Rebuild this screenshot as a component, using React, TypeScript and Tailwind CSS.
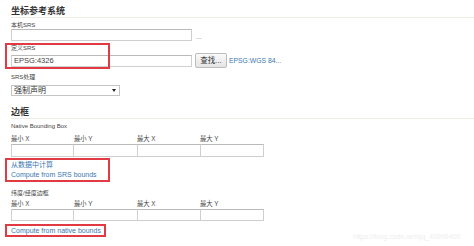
const font = "font-['Liberation_Sans','Noto_Sans_CJK_SC',sans-serif]"

function Label({ children }: { children: React.ReactNode }) {
  return <div className="h-[8px] text-[6px] leading-[8px] text-[#444]">{children}</div>
}

function Heading({ children, className }: { children: React.ReactNode; className: string }) {
  return (
    <div className={`border-b border-[#ecece6] text-[9px] font-bold text-[#333] ${className}`}>
      {children}
    </div>
  )
}

const cols = ['最小 X', '最小 Y', '最大 X', '最大 Y']

function BoundsGrid({ inputHeight }: { inputHeight: string }) {
  return (
    <>
      <div className="grid w-[252px] grid-cols-4">
        {cols.map((c) => (
          <div key={c} className="h-[8px] text-[6.3px] leading-[8px] text-[#444]">
            {c}
          </div>
        ))}
      </div>
      <div className="mt-[1px] grid w-[253px] grid-cols-4">
        {cols.map((c, i) => (
          <div
            key={c}
            className={`${inputHeight} border border-[#cfcfcf] border-t-[#b9b9b9] bg-white ${i > 0 ? '-ml-px' : ''}`}
          />
        ))}
      </div>
    </>
  )
}

export default function App() {
  return (
    <div className={`relative h-[246px] w-[474px] overflow-hidden bg-white ${font}`}>
      <div className="flex flex-col pl-[11px]">
        <Heading className="mt-[5px] h-[13px] leading-[12px]">坐标参考系统</Heading>

        <div className="mt-[3px]">
          <Label>本机SRS</Label>
        </div>
        <div className="flex items-end">
          <div className="h-[12px] w-[181px] border border-[#cfcfcf] border-t-[#b9b9b9]" />
          <span className="ml-[4px] text-[7px] leading-[8px] text-[#888]">...</span>
        </div>

        <div className="mt-[3px]">
          <Label>定义SRS</Label>
        </div>
        <div className="mt-[1px] flex h-[15px] items-center">
          <div className="flex h-[12px] w-[181px] items-center border border-[#cfcfcf] border-t-[#b9b9b9] pl-[2px] text-[7.5px] text-[#444]">
            EPSG:4326
          </div>
          <button
            type="button"
            className="ml-[3px] flex h-[15px] w-[32px] items-center justify-center rounded-[2px] border border-[#bdbdbd] bg-gradient-to-b from-[#fafafa] to-[#e4e4e4] text-[7.5px] text-[#333]"
          >
            查找...
          </button>
          <span className="ml-[2px] mt-[2px] text-[6.8px] text-[#3a77b0]">EPSG:WGS 84...</span>
        </div>

        <div className="mt-[5px]">
          <Label>SRS处理</Label>
        </div>
        <div className="mt-[4px] flex h-[11px] w-[109px] items-center justify-between border border-[#c4c4c4] pl-[2px] pr-[3px] text-[8px] text-[#333]">
          <span>强制声明</span>
          <svg viewBox="0 0 4 3" className="h-[3px] w-[4px] fill-[#222]">
            <path d="M0 0h4L2 3z" />
          </svg>
        </div>

        <Heading className="mt-[11px] h-[12px] leading-[11px]">边框</Heading>

        <div className="mt-[3px]">
          <Label>Native Bounding Box</Label>
        </div>
        <div className="mt-[5px]">
          <BoundsGrid inputHeight="h-[13px]" />
        </div>

        <div className="-ml-[6px] mt-[1px] h-[24px] w-[105px] border-2 border-[#e23a43] pl-[4px] text-[7px] leading-[10px] text-[#3a77b0]">
          <div>从数据中计算</div>
          <div>Compute from SRS bounds</div>
        </div>

        <div className="mt-[7px]">
          <Label>纬度/经度边框</Label>
        </div>
        <div className="mt-[3px]">
          <BoundsGrid inputHeight="h-[12px]" />
        </div>

        <div className="-ml-[6px] mt-[3px] h-[13px] w-[101px] border-2 border-[#e23a43] pl-[4px] text-[7px] leading-[9px] text-[#3a77b0]">
          Compute from native bounds
        </div>
      </div>

      <div className="absolute left-[5px] top-[43px] h-[26px] w-[105px] border-2 border-[#e23a43]" />

      <div className="absolute left-[353px] top-[232px] text-[7px] leading-[9px] text-[#eeeeee]">
        https://blog.csdn.net/qq_40996400
      </div>
    </div>
  )
}
